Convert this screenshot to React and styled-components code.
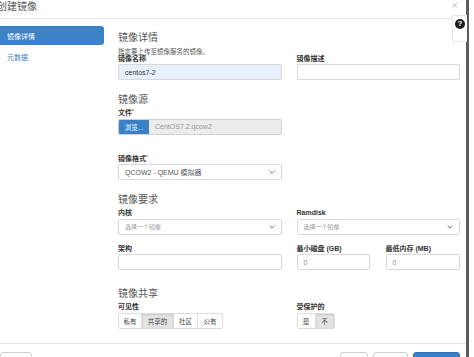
import React from 'react';
import styled, { createGlobalStyle } from 'styled-components';

const GlobalStyle = createGlobalStyle`
  html, body { margin: 0; padding: 0; background: #fff; }
  body {
    font-family: "Liberation Sans", "Noto Sans CJK SC", sans-serif;
    color: #333;
    overflow: hidden;
  }
  * { box-sizing: border-box; }
`;

const Page = styled.div`
  position: relative;
  width: 474px;
  height: 357px;
  overflow: hidden;
  background: #fff;
`;

const Modal = styled.div`
  width: 469px;
  height: 357px;
  border-right: 3px solid #5c5c5c;
  display: flex;
  flex-direction: column;
`;

const Header = styled.div`
  height: 19px;
  border-bottom: 1px solid #e5e5e5;
  display: flex;
  align-items: center;
  justify-content: space-between;
  padding-right: 8px;
  flex-shrink: 0;
`;

const Title = styled.h4`
  margin: 0 0 0 -3px;
  font-size: 10px;
  font-weight: 400;
  color: #555;
  line-height: 12px;
  position: relative;
  top: -2px;
`;

const Close = styled.span`
  font-size: 11px;
  line-height: 11px;
  color: #c4c4c4;
  position: relative;
  top: -4px;
`;

const HelpTab = styled.div`
  position: absolute;
  left: 452px;
  top: 15px;
  width: 15px;
  height: 27px;
  background: #fff;
  border: 1px solid #e8e8e8;
  border-right: none;
  display: flex;
  justify-content: center;
  padding-top: 3px;
`;

const HelpIcon = styled.span`
  width: 10px;
  height: 10px;
  border-radius: 50%;
  background: #1c1c1c;
  color: #fff;
  font-size: 8px;
  font-weight: 700;
  line-height: 10px;
  text-align: center;
`;

const Body = styled.div`
  display: flex;
  height: 324px;
  flex-shrink: 0;
`;

const Nav = styled.ul`
  list-style: none;
  margin: 0;
  padding: 7px 0 0;
  width: 104px;
  display: flex;
  flex-direction: column;
  gap: 2px;
`;

const NavItem = styled.li`
  height: 19px;
  padding-left: 7px;
  display: flex;
  align-items: center;
  font-size: 7px;
  border-radius: 0 3px 3px 0;
  background: ${p => (p.active ? '#3b82c6' : 'transparent')};
  color: ${p => (p.active ? '#fff' : '#3a7fc2')};
`;

const Content = styled.div`
  margin-left: 14px;
  width: 342px;
  padding-top: 13px;
  display: flex;
  flex-direction: column;
`;

const Heading = styled.h3`
  margin: ${p => p.top || 0}px 0 0;
  font-size: 10px;
  line-height: 12px;
  font-weight: 400;
  color: #555;
`;

const Desc = styled.p`
  margin: 3.5px 0 0;
  font-size: 6.5px;
  line-height: 7px;
  color: #555;
`;

const Row = styled.div`
  display: grid;
  grid-template-columns: 1fr 1fr;
  column-gap: 15px;
  margin-top: ${p => (p.gap === undefined ? 3 : p.gap)}px;
`;

const Split = styled.div`
  display: grid;
  grid-template-columns: 73px 74px;
  column-gap: 16px;
`;

const Field = styled.div`
  display: flex;
  flex-direction: column;
`;

const Label = styled.label`
  font-size: 7px;
  line-height: 8px;
  height: 8px;
  font-weight: 700;
  color: #333;
  margin-bottom: 1.5px;
  sup {
    font-size: 5px;
    line-height: 0;
    color: #c33;
    vertical-align: baseline;
    position: relative;
    top: -2px;
  }
`;

const Input = styled.div`
  height: 16px;
  border: 1px solid #d8d8d8;
  border-radius: 2px;
  background: ${p => p.filled || '#fff'};
  padding-left: 6px;
  display: flex;
  align-items: center;
  font-size: 7px;
  color: ${p => (p.muted ? '#888' : '#333')};
`;

const Select = styled(Input)`
  justify-content: space-between;
  padding-right: 6px;
  color: #555;
`;

const Hint = styled.span`
  font-size: 6px;
  color: #999;
`;

const FileBox = styled.div`
  height: 16px;
  display: flex;
  border: 1px solid #d0d0d0;
  border-radius: 2px;
  overflow: hidden;
`;

const Browse = styled.span`
  width: 30px;
  background: #3a80c4;
  color: #fff;
  font-size: 6.5px;
  display: flex;
  align-items: center;
  justify-content: center;
`;

const FileName = styled.span`
  flex: 1;
  background: #ececec;
  color: #999;
  font-size: 7px;
  display: flex;
  align-items: center;
  padding-left: 6px;
`;

const Group = styled.div`
  display: flex;
  height: 16px;
`;

const Toggle = styled.span`
  width: ${p => p.w}px;
  border: 1px solid #dcdcdc;
  margin-left: -1px;
  background: ${p => (p.active ? '#e3e3e3' : '#fff')};
  box-shadow: ${p => (p.active ? 'inset 0 1px 2px rgba(0,0,0,0.12)' : 'none')};
  font-size: 6.5px;
  color: #444;
  display: flex;
  align-items: center;
  justify-content: center;
  &:first-child { margin-left: 0; border-radius: 2px 0 0 2px; }
  &:last-child { border-radius: 0 2px 2px 0; }
`;

const Footer = styled.div`
  border-top: 1px solid #e5e5e5;
  padding: 8px 6px 0 0;
  display: flex;
  justify-content: space-between;
  flex: 1;
`;

const Actions = styled.div`
  display: flex;
  gap: 5px;
`;

const Button = styled.span`
  width: ${p => p.w}px;
  height: 18px;
  border: 1px solid ${p => (p.primary ? '#2f74b8' : '#cfcfcf')};
  background: ${p => (p.primary ? '#3a82c8' : '#fff')};
  border-radius: 3px;
`;

const Chevron = () => (
  <svg width="6" height="4" viewBox="0 0 6 4">
    <path d="M0.6 0.8 L3 3.2 L5.4 0.8" fill="none" stroke="#666" strokeWidth="0.9" />
  </svg>
);

export default function App() {
  return (
    <Page>
      <GlobalStyle />
      <Modal>
        <Header>
          <Title>创建镜像</Title>
          <Close>×</Close>
        </Header>
        <Body>
          <Nav>
            <NavItem active>镜像详情</NavItem>
            <NavItem>元数据</NavItem>
          </Nav>
          <Content>
            <Heading>镜像详情</Heading>
            <Desc>指定要上传至镜像服务的镜像。</Desc>
            <Row gap={0}>
              <Field>
                <Label>镜像名称</Label>
                <Input filled="#e8f0fe">centos7-2</Input>
              </Field>
              <Field>
                <Label>镜像描述</Label>
                <Input />
              </Field>
            </Row>

            <Heading top={14}>镜像源</Heading>
            <Row>
              <Field>
                <Label>文件<sup>*</sup></Label>
                <FileBox>
                  <Browse>浏览...</Browse>
                  <FileName>CentOS7.2.qcow2</FileName>
                </FileBox>
              </Field>
            </Row>
            <Row gap={20}>
              <Field>
                <Label>镜像格式<sup>*</sup></Label>
                <Select>QCOW2 - QEMU 模拟器<Chevron /></Select>
              </Field>
            </Row>

            <Heading top={14}>镜像要求</Heading>
            <Row>
              <Field>
                <Label>内核</Label>
                <Select><Hint>选择一个镜像</Hint><Chevron /></Select>
              </Field>
              <Field>
                <Label>Ramdisk</Label>
                <Select><Hint>选择一个镜像</Hint><Chevron /></Select>
              </Field>
            </Row>
            <Row gap={10}>
              <Field>
                <Label>架构</Label>
                <Input />
              </Field>
              <Split>
                <Field>
                  <Label>最小磁盘 (GB)</Label>
                  <Input muted>0</Input>
                </Field>
                <Field>
                  <Label>最低内存 (MB)</Label>
                  <Input muted>0</Input>
                </Field>
              </Split>
            </Row>

            <Heading top={18}>镜像共享</Heading>
            <Row>
              <Field>
                <Label>可见性</Label>
                <Group>
                  <Toggle w={24}>私有</Toggle>
                  <Toggle w={33} active>共享的</Toggle>
                  <Toggle w={25}>社区</Toggle>
                  <Toggle w={26}>公有</Toggle>
                </Group>
              </Field>
              <Field>
                <Label>受保护的</Label>
                <Group>
                  <Toggle w={19}>是</Toggle>
                  <Toggle w={20} active>不</Toggle>
                </Group>
              </Field>
            </Row>
          </Content>
        </Body>
        <Footer>
          <Button w={32} />
          <Actions>
            <Button w={28} />
            <Button w={35} />
            <Button w={47} primary />
          </Actions>
        </Footer>
      </Modal>
      <HelpTab>
        <HelpIcon>?</HelpIcon>
      </HelpTab>
    </Page>
  );
}
